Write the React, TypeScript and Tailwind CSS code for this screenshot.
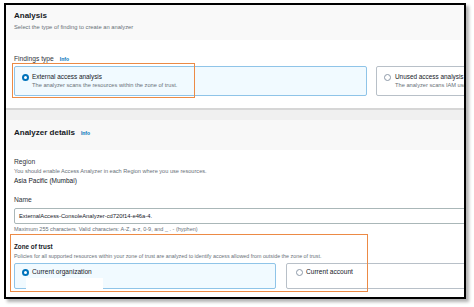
import React from 'react';

const font = { fontFamily: '"Liberation Sans", Arial, sans-serif' };

function Radio({ checked }: { checked?: boolean }) {
  return checked ? (
    <span className="block w-[7px] h-[7px] rounded-full border-[2px] border-[#0073bb] bg-white shrink-0" />
  ) : (
    <span className="block w-[7px] h-[7px] rounded-full border border-[#8d99a8] bg-white shrink-0" />
  );
}

function Info() {
  return <span className="text-[5px] font-bold text-[#0073bb] ml-[6px]">Info</span>;
}

export default function App() {
  return (
    <div className="relative w-[474px] h-[307px] bg-white overflow-hidden text-[#16191f]" style={font}>
      <div className="pl-[4px] pt-[3px]">
        <div className="w-[462px] h-[296px] border-2 border-black shadow-[3px_3px_3px_rgba(0,0,0,0.3)] overflow-hidden bg-white flex flex-col">
          {/* Analysis header */}
          <div className="h-[35px] shrink-0 bg-[#f9f9f9] px-[8px] pt-[6px]">
            <div className="text-[8px] font-bold leading-[10px]">Analysis</div>
            <div className="text-[5.8px] leading-[7px] mt-[2.5px] text-[#687078]">Select the type of finding to create an analyzer</div>
          </div>

          {/* Analysis body */}
          <div className="h-[68px] shrink-0 px-[8px] pt-[14.5px]">
            <div className="flex items-center text-[6.7px] leading-[8px] text-[#2f343b]">
              Findings type <Info />
            </div>
            <div className="flex gap-[9px] mt-[3.5px] h-[30px]">
              <div className="w-[353px] shrink-0 border border-[#8fc4e8] bg-[#f1faff] rounded-[2px] flex pl-[7px] pt-[6px] gap-[3px]">
                <div className="pt-[0.5px]"><Radio checked /></div>
                <div>
                  <div className="text-[6.4px] leading-[8px]">External access analysis</div>
                  <div className="text-[5.7px] leading-[7px] mt-[1px] text-[#687078]">The analyzer scans the resources within the zone of trust.</div>
                </div>
              </div>
              <div className="w-[200px] shrink-0 border border-[#b8c0c8] bg-white rounded-[2px] flex pl-[7px] pt-[6px] gap-[4px]">
                <div className="pt-[0.5px]"><Radio /></div>
                <div>
                  <div className="text-[6.4px] leading-[8px] whitespace-nowrap">Unused access analysis</div>
                  <div className="text-[5.7px] leading-[7px] mt-[1px] text-[#687078] whitespace-nowrap">The analyzer scans IAM users and roles for unused access.</div>
                </div>
              </div>
            </div>
          </div>

          <div className="h-[2px] shrink-0 bg-[#d6d6d6]" />
          <div className="h-[10px] shrink-0 bg-[#f0f0f0]" />

          {/* Analyzer details header */}
          <div className="h-[30px] shrink-0 bg-[#f8f8f8] px-[8px] pt-[8px]">
            <div className="flex items-center text-[8px] font-bold leading-[10px]">
              Analyzer details <Info />
            </div>
          </div>

          {/* Analyzer details body */}
          <div className="flex-1 px-[8px] pt-[7.5px]">
            <div className="text-[6.7px] leading-[8px] text-[#2f343b]">Region</div>
            <div className="text-[5.6px] leading-[7px] mt-[2px] text-[#687078]">You should enable Access Analyzer in each Region where you use resources.</div>
            <div className="text-[6.5px] leading-[8px] mt-[2px]">Asia Pacific (Mumbai)</div>

            <div className="text-[6.7px] leading-[8px] mt-[11.5px] text-[#2f343b]">Name</div>
            <div className="mt-[4px] h-[16px] w-[600px] border border-[#aab7b8] rounded-[2px] flex items-center pl-[4px] text-[5.8px]">
              ExternalAccess-ConsoleAnalyzer-cd720f14-e46a-4.
            </div>
            <div className="text-[5.5px] leading-[6px] mt-[2px] text-[#687078]">Maximum 255 characters. Valid characters: A-Z, a-z, 0-9, and _ . - (hyphen)</div>

            <div className="text-[6.3px] font-bold leading-[8px] mt-[10.5px]">Zone of trust</div>
            <div className="text-[5.35px] leading-[6px] mt-[2px] text-[#687078] whitespace-nowrap">Policies for all supported resources within your zone of trust are analyzed to identify access allowed from outside the zone of trust.</div>
            <div className="flex gap-[10px] mt-[4.5px] h-[26px]">
              <div className="w-[262px] shrink-0 border border-[#8fc4e8] bg-[#f1faff] rounded-[2px] pl-[7px] pt-[4px]">
                <div className="flex items-center gap-[3px]">
                  <Radio checked />
                  <span className="text-[6.6px] leading-[8px]">Current organization</span>
                </div>
                <div className="ml-[4px] mt-[1.5px] w-[77px] h-[11px] bg-white" />
              </div>
              <div className="w-[300px] shrink-0 border border-[#b8c0c8] bg-white rounded-[2px] pl-[9px] pt-[4px]">
                <div className="flex items-center gap-[3px]">
                  <Radio />
                  <span className="text-[6.6px] leading-[8px]">Current account</span>
                </div>
              </div>
            </div>
          </div>
        </div>
      </div>

      {/* annotation highlights */}
      <div className="absolute left-[12px] top-[63px] w-[183px] h-[35px] border-[1.5px] border-[#ec8a45]" />
      <div className="absolute left-[10px] top-[234px] w-[358px] h-[58px] border-[1.5px] border-[#ec8a45]" />
    </div>
  );
}
